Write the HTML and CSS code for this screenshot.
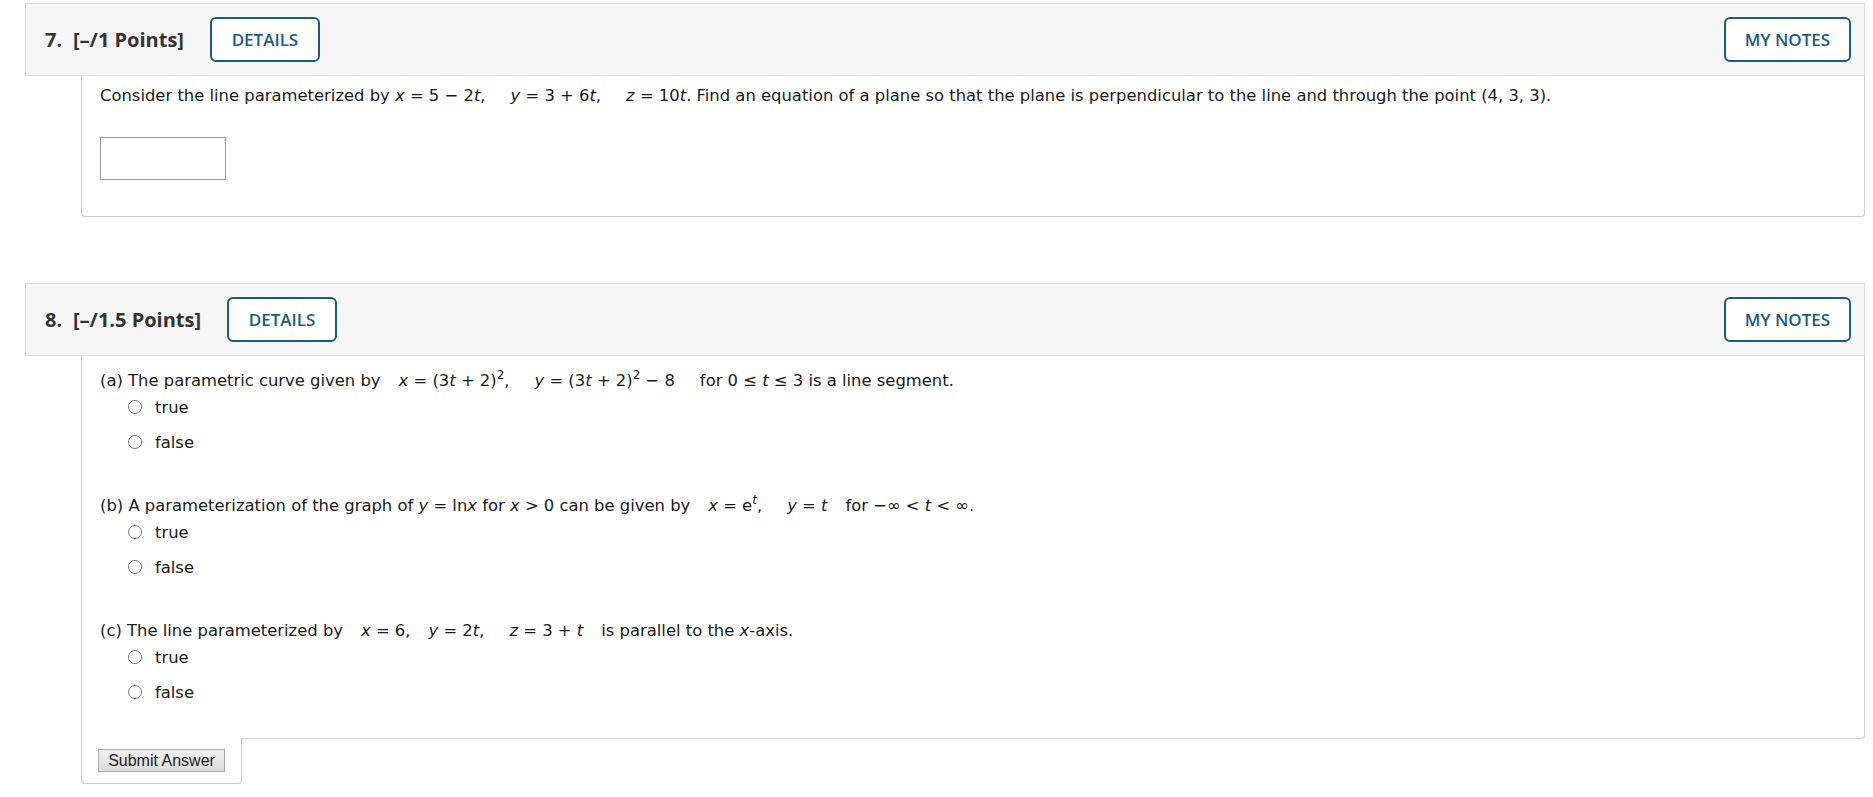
FILE: index.html
```html
<!DOCTYPE html>
<html>
<head>
<meta charset="utf-8">
<link rel="stylesheet" href="styles.css">
</head>
<body>
<div class="page">
  <section class="question q7">
    <div class="qhead">
      <span class="qnum">7.</span>
      <span class="qpts">[&ndash;/1 Points]</span>
      <button class="hbtn details">DETAILS</button>
      <button class="hbtn notes">MY NOTES</button>
    </div>
    <div class="qbody rounded">
      <p class="stem">Consider the line parameterized by <i>x</i> = 5 &minus; 2<i>t</i>,<span class="sp"></span><i>y</i> = 3 + 6<i>t</i>,<span class="sp"></span><i>z</i> = 10<i>t</i>. Find an equation of a plane so that the plane is perpendicular to the line and through the point (4, 3, 3).</p>
      <div class="answer-box"></div>
    </div>
  </section>

  <section class="question q8">
    <div class="qhead">
      <span class="qnum">8.</span>
      <span class="qpts">[&ndash;/1.5 Points]</span>
      <button class="hbtn details">DETAILS</button>
      <button class="hbtn notes">MY NOTES</button>
    </div>
    <div class="qbody parts">
      <div class="part">
        <p class="stem">(a) The parametric curve given by<span class="sp2"></span><i>x</i> = (3<i>t</i> + 2)<sup>2</sup>,<span class="sp"></span><i>y</i> = (3<i>t</i> + 2)<sup>2</sup> &minus; 8<span class="sp"></span>for 0 &le; <i>t</i> &le; 3 is a line segment.</p>
        <label class="opt"><span class="radio"></span>true</label>
        <label class="opt"><span class="radio"></span>false</label>
      </div>
      <div class="part">
        <p class="stem">(b) A parameterization of the graph of <i>y</i> = ln<i>x</i> for <i>x</i> &gt; 0 can be given by<span class="sp2"></span><i>x</i> = e<sup><i>t</i></sup>,<span class="sp"></span><i>y</i> = <i>t</i><span class="sp2"></span>for &minus;&infin; &lt; <i>t</i> &lt; &infin;.</p>
        <label class="opt"><span class="radio"></span>true</label>
        <label class="opt"><span class="radio"></span>false</label>
      </div>
      <div class="part">
        <p class="stem">(c) The line parameterized by<span class="sp2"></span><i>x</i> = 6,<span class="sp2"></span><i>y</i> = 2<i>t</i>,<span class="sp"></span><i>z</i> = 3 + <i>t</i><span class="sp2"></span>is parallel to the <i>x</i>-axis.</p>
        <label class="opt"><span class="radio"></span>true</label>
        <label class="opt"><span class="radio"></span>false</label>
      </div>
    </div>
    <div class="submit-tab">
      <button class="submit">Submit Answer</button>
    </div>
  </section>
</div>
</body>
</html>
```

FILE: styles.css
```css
html, body {
  margin: 0;
  padding: 0;
  background: #ffffff;
}

.page {
  padding: 3px 8px 0 25px;
}

.question {
  display: flex;
  flex-direction: column;
}

.q8 {
  margin-top: 66px;
}

.qhead {
  display: flex;
  align-items: center;
  height: 71px;
  padding: 0 13px 0 19px;
  background: #f6f6f6;
  border: 1px solid #dddddd;
  font-family: "Open Sans", "Noto Sans", sans-serif;
  color: #333333;
}

.qnum {
  font-size: 20px;
  font-weight: 700;
  width: 28px;
}

.qpts {
  font-size: 20px;
  font-weight: 700;
}

.hbtn {
  font-family: "Open Sans", "Noto Sans", sans-serif;
  font-size: 17px;
  font-weight: 600;
  color: #1b5a86;
  background: #ffffff;
  border: 2px solid #1b5a86;
  border-radius: 6px;
  height: 45px;
  padding: 0;
  cursor: pointer;
}

.details {
  width: 110px;
  margin-left: 26px;
}

.notes {
  width: 127px;
  margin-left: auto;
}

.qbody {
  margin-left: 56px;
  border-left: 1px solid #cccccc;
  border-right: 1px solid #cccccc;
  border-bottom: 1px solid #cccccc;
  font-family: "DejaVu Sans", Verdana, sans-serif;
  font-size: 16.4px;
  color: #1a1a1a;
}

.rounded {
  border-radius: 0 0 4px 4px;
  padding: 9px 18px 36px 18px;
}

.stem {
  margin: 0;
  line-height: 22px;
}

.stem i {
  font-style: italic;
}

.stem sup {
  font-size: 12px;
  line-height: 0;
  vertical-align: 7px;
}

.sp {
  display: inline-block;
  width: 25px;
}

.sp2 {
  display: inline-block;
  width: 18px;
}

.answer-box {
  width: 124px;
  height: 41px;
  margin-top: 30px;
  border: 1px solid #999999;
  background: #ffffff;
}

.parts {
  border-radius: 0 0 4px 0;
  padding: 14px 18px 35px 18px;
  display: flex;
  flex-direction: column;
  gap: 42px;
}

.part {
  display: flex;
  flex-direction: column;
}

.opt {
  display: flex;
  align-items: center;
  gap: 13px;
  height: 22px;
  margin-left: 28px;
  margin-top: 13px;
}

.stem + .opt {
  margin-top: 4px;
}

.radio {
  width: 12px;
  height: 12px;
  border: 1px solid #767676;
  border-radius: 50%;
  background: #ffffff;
}

.submit-tab {
  align-self: flex-start;
  margin-left: 56px;
  margin-top: -1px;
  width: 143px;
  padding: 11px 0 11px 16px;
  background: #ffffff;
  border: 1px solid #cccccc;
  border-top: none;
  border-radius: 0 0 4px 4px;
}

.submit {
  font-family: "Liberation Sans", Arial, sans-serif;
  font-size: 16px;
  color: #222222;
  width: 127px;
  height: 23px;
  padding: 0;
  border: 1px solid #a9a9a9;
  background: linear-gradient(#f0f0f0, #dcdcdc);
}
```
